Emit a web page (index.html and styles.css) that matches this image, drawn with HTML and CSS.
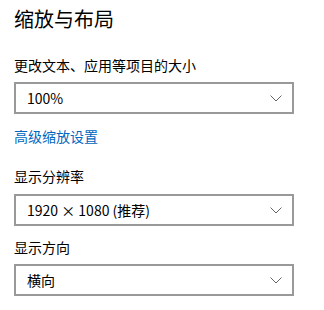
FILE: index.html
```html
<!DOCTYPE html>
<html lang="zh-CN">
<head>
<meta charset="utf-8">
<link rel="stylesheet" href="styles.css">
</head>
<body>
<div class="page">
  <h1 class="title">缩放与布局</h1>
  <div class="label label-first">更改文本、应用等项目的大小</div>
  <div class="select"><span class="value">100%</span>
    <svg class="chev" width="12" height="7" viewBox="0 0 12 7"><path d="M0.5 0.5 L6 6 L11.5 0.5" fill="none" stroke="#666" stroke-width="1"/></svg>
  </div>
  <a class="link">高级缩放设置</a>
  <div class="label label-res">显示分辨率</div>
  <div class="select"><span class="value">1920 × 1080 (推荐)</span>
    <svg class="chev" width="12" height="7" viewBox="0 0 12 7"><path d="M0.5 0.5 L6 6 L11.5 0.5" fill="none" stroke="#666" stroke-width="1"/></svg>
  </div>
  <div class="label label-ori">显示方向</div>
  <div class="select"><span class="value">横向</span>
    <svg class="chev" width="12" height="7" viewBox="0 0 12 7"><path d="M0.5 0.5 L6 6 L11.5 0.5" fill="none" stroke="#666" stroke-width="1"/></svg>
  </div>
</div>
</body>
</html>
```
FILE: styles.css
```css
html, body {
  margin: 0;
  padding: 0;
  background: #fff;
}
body {
  font-family: "Noto Sans CJK SC", "Noto Sans", sans-serif;
  color: #000;
}
.page {
  padding: 5px 0 0 14px;
  display: flex;
  flex-direction: column;
  align-items: flex-start;
}
.title {
  margin: 0;
  font-size: 20px;
  font-weight: normal;
  line-height: 28px;
}
.label {
  font-size: 14px;
  line-height: 20px;
}
.label-first { margin-top: 22px; margin-bottom: 7px; }
.label-res { margin-top: 20px; margin-bottom: 8px; }
.label-ori { margin-top: 11px; margin-bottom: 7px; }
.select {
  box-sizing: border-box;
  width: 280px;
  height: 32px;
  border: 2px solid #999;
  display: flex;
  align-items: center;
  justify-content: space-between;
  padding: 0 10px 0 11px;
}
.value {
  font-size: 14px;
  line-height: 20px;
}
.chev { display: block; }
.link {
  margin-top: 12px;
  font-size: 14px;
  line-height: 20px;
  color: #0067c0;
}
```
